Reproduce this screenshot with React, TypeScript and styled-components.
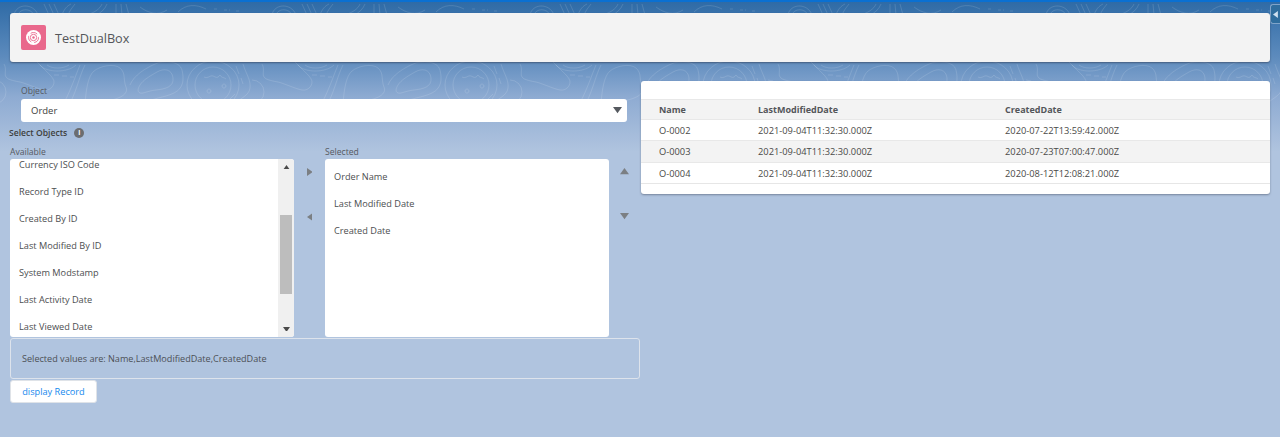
import React from "react";
import styled, { createGlobalStyle } from "styled-components";

const GlobalStyle = createGlobalStyle`
  html, body { margin: 0; padding: 0; }
  body {
    font-family: "Open Sans", "Noto Sans", "Liberation Sans", sans-serif;
    color: #3e3e3c;
    overflow: hidden;
  }
`;

const Page = styled.div`
  position: relative;
  width: 1280px;
  height: 437px;
  box-sizing: border-box;
  padding: 11px 10px 0;
  overflow: hidden;
  background: linear-gradient(180deg, #2f6ba6 0, #5d8bbd 55px, #8eabd2 95px, #b0c4df 150px);
  border-top: 2px solid #0a70d2;
`;

const Contours = styled.svg`
  position: absolute;
  left: 0;
  top: 0;
  width: 1280px;
  height: 104px;
`;

const SideTab = styled.div`
  position: absolute;
  right: 0;
  top: 2px;
  width: 10px;
  height: 20px;
  display: flex;
  align-items: center;
  justify-content: center;
  box-sizing: border-box;
  border: 1px solid #7fa3c9;
  border-right: 0;
  border-radius: 3px 0 0 3px;
  background: #2f6d9e;
`;

const Header = styled.header`
  position: relative;
  height: 49px;
  display: flex;
  align-items: center;
  gap: 9px;
  padding: 0 11px;
  background: #f3f3f3;
  border-radius: 3px;
  box-shadow: 0 1px 2px rgba(40, 50, 70, 0.55);
`;

const HeaderIcon = styled.div`
  width: 25px;
  height: 25px;
  display: flex;
  align-items: center;
  justify-content: center;
  background: #e9688c;
  border-radius: 2px;
`;

const HeaderTitle = styled.h1`
  margin: 0;
  font-size: 12.7px;
  font-weight: 400;
  color: #54565a;
`;

const Columns = styled.div`
  position: relative;
  display: grid;
  grid-template-columns: 630px 630px;
  margin-top: 19px;
`;

const LeftColumn = styled.section`
  display: flex;
  flex-direction: column;
`;

const ObjectField = styled.div`
  padding: 4px 13px 0 11px;
`;

const SmallLabel = styled.div`
  font-size: 8.6px;
  line-height: 12px;
  color: #55595f;
`;

const SelectBox = styled.div`
  height: 23px;
  margin-top: 2px;
  display: flex;
  align-items: center;
  justify-content: space-between;
  padding: 0 5px 0 10px;
  background: #fff;
  border-radius: 3px;
  font-size: 9.5px;
  color: #3e3e3c;
`;

const GroupTitle = styled.div`
  margin: 5px 0 0 -1px;
  height: 12px;
  display: flex;
  align-items: center;
  gap: 7px;
  font-size: 8.6px;
  font-weight: 600;
  color: #3e3e3c;
`;

const InfoDot = styled.span`
  width: 10px;
  height: 10px;
  border-radius: 50%;
  background: #6b6d70;
  color: #fff;
  font-size: 7px;
  line-height: 10px;
  font-weight: 700;
  text-align: center;
`;

const DualBox = styled.div`
  display: grid;
  grid-template-columns: 284px 31px 284px 31px;
  margin-top: 7px;
`;

const BoxColumn = styled.div`
  display: flex;
  flex-direction: column;
`;

const ListPanel = styled.div`
  height: 178px;
  margin-top: 1px;
  display: flex;
  overflow: hidden;
  background: #fff;
  border-radius: 3px;
`;

const ListItems = styled.ul<{ $offset: number }>`
  flex: 1;
  margin: ${(p) => p.$offset}px 0 0;
  padding: 0 0 0 9px;
  list-style: none;
`;

const ListItem = styled.li`
  height: 27px;
  line-height: 27px;
  font-size: 9.2px;
  white-space: nowrap;
  color: #4c4e50;
`;

const Scrollbar = styled.div`
  width: 16px;
  display: flex;
  flex-direction: column;
  align-items: center;
  background: #f0f0f0;
`;

const ScrollButton = styled.div`
  height: 16px;
  display: flex;
  align-items: center;
  justify-content: center;
`;

const ScrollTrack = styled.div`
  flex: 1;
  width: 12px;
  padding-top: 40px;
  box-sizing: border-box;
  align-self: center;
`;

const ScrollThumb = styled.div`
  height: 79px;
  background: #bdbdbd;
`;

const MoveButtons = styled.div`
  display: flex;
  flex-direction: column;
  align-items: center;
  gap: 38px;
  padding-top: 22px;
`;

const ArrowSlot = styled.div`
  height: 7px;
  display: flex;
  align-items: center;
  justify-content: center;
`;

const Triangle = styled.svg<{ $color?: string }>`
  display: block;
  fill: ${(p) => p.$color || "#7b7f83"};
`;

const ValuesBox = styled.div`
  height: 41px;
  margin-top: 1px;
  box-sizing: border-box;
  display: flex;
  align-items: center;
  padding: 0 0 0 11px;
  border: 1px solid #dde3ec;
  border-radius: 3px;
  font-size: 9.1px;
  color: #4c5056;
`;

const ActionButton = styled.button`
  width: 87px;
  height: 23px;
  margin-top: 1px;
  padding: 0;
  border: 1px solid #dfe3e8;
  border-radius: 3px;
  background: #fff;
  color: #1589ee;
  font: inherit;
  font-size: 9.2px;
`;

const TableCard = styled.section`
  align-self: start;
  margin-left: 1px;
  height: 113px;
  box-sizing: border-box;
  padding-top: 18px;
  background: #fff;
  border-radius: 3px;
  box-shadow: 0 1px 2px rgba(60, 70, 90, 0.5);
`;

const Table = styled.div`
  border-top: 1px solid #e8e8e8;
  border-bottom: 1px solid #e6e6e6;
`;

const TableRow = styled.div<{ $height: number; $head?: boolean; $shade?: boolean }>`
  display: grid;
  grid-template-columns: 99px 247px 1fr;
  align-items: center;
  box-sizing: border-box;
  height: ${(p) => p.$height}px;
  padding-left: 18px;
  background: ${(p) => (p.$shade ? "#f3f3f3" : "#fff")};
  border-bottom: 1px solid #e8e8e8;
  font-size: ${(p) => (p.$head ? 9 : 9.3)}px;
  font-weight: ${(p) => (p.$head ? 700 : 400)};
  color: ${(p) => (p.$head ? "#54565a" : "#4a4a48")};
  &:last-child { border-bottom: 0; }
`;

const available = [
  "Currency ISO Code",
  "Record Type ID",
  "Created By ID",
  "Last Modified By ID",
  "System Modstamp",
  "Last Activity Date",
  "Last Viewed Date",
];

const selected = ["Order Name", "Last Modified Date", "Created Date"];

const records = [
  { height: 21, cells: ["O-0002", "2021-09-04T11:32:30.000Z", "2020-07-22T13:59:42.000Z"] },
  { height: 22, cells: ["O-0003", "2021-09-04T11:32:30.000Z", "2020-07-23T07:00:47.000Z"] },
  { height: 20, cells: ["O-0004", "2021-09-04T11:32:30.000Z", "2020-08-12T12:08:21.000Z"] },
];

const arrows: Record<string, string> = {
  up: "0,7 5,0 10,7",
  down: "0,0 10,0 5,7",
  left: "7,0 7,10 0,5",
  right: "0,0 7,5 0,10",
};

const Arrow = ({ dir, size = 9, color }: { dir: string; size?: number; color?: string }) => {
  const flat = dir === "up" || dir === "down";
  return (
    <Triangle
      $color={color}
      width={flat ? size : size * 0.7}
      height={flat ? size * 0.7 : size}
      viewBox={flat ? "0 0 10 7" : "0 0 7 10"}
    >
      <polygon points={arrows[dir]} />
    </Triangle>
  );
};

const TopoPattern = () => (
  <Contours>
    <defs>
      <pattern id="topo" width="258" height="104" patternUnits="userSpaceOnUse">
        <g fill="none" stroke="#fff" strokeOpacity="0.16" strokeWidth="0.8">
          {/* top band */}
          <path d="M14 13c2-12 20-12 24 0" />
          <path d="M18 13c2-7 13-7 16 0" />
          <path d="M44 2l5 11M49 2l5 11M54 2l5 11" />
          <path d="M62 13c2-6 5-9 9-11M68 13c2-5 4-7 7-11" />
          <path d="M86 13c8-2 14-6 16-11M96 13c5-2 9-6 11-11" />
          <path d="M116 2v11M121 2l1 11M126 2l3 11" />
          <path d="M140 5c8 6 18 9 27 3" />
          <path d="M178 10c8-8 18-8 28-3" />
          <path d="M214 7h5M224 8h6M236 9h5" strokeDasharray="3 2" />
          {/* lower band */}
          <path d="M4 62c3 5 0 10 2 13s9 4 14 5 18 7 24 8 10-4 10-8-6-9-9-12-4-4-8-8" />
          <path d="M-6 78a12 12 0 1 1 0 24M252 78a12 12 0 1 1 0 24" />
          <path d="M40 63c6 8 28 8 36 0M47 63c5 4 16 4 22 0" />
          <path d="M54 73h5M62 74h5M70 75h4" />
          <path d="M85 63c-6 12-8 25-15 38M80 63c-5 12-8 22-16 38" />
          <path d="M85 102c1-14 3-28 9-33s20-8 26-3 3 12 6 19-6 12-20 14" />
          <path d="M140 83c3-5 10-9 17-13s15-3 16 6-8 11-17 12-13 4-16 3-2-5 0-8z" />
          <path d="M130 83c4-10 16-17 25-21s25-3 27 6 2 18-8 23-24 5-28 11" />
          <path d="M195 83a18 18 0 1 1 36 0 18 18 0 1 1-36 0z" />
          <path d="M187 83a26 24 0 1 1 52 0 26 24 0 1 1-52 0z" />
          <path d="M204 75c4 2 6-2 9-1s4 3 7-1c1 3 4 2 6 4" />
          <path d="M207 89a2 2 0 1 1 0 .1M222 84a2 2 0 1 1 0 .1" />
          <path d="M243 62c3 10 8 16 7 24s-10 10-15 16" />
          <path d="M236 64l3 8M241 76l2 6M235 92l-6 6" />
        </g>
      </pattern>
    </defs>
    <rect width="1280" height="104" fill="url(#topo)" />
  </Contours>
);

const App = () => (
  <Page>
    <GlobalStyle />
    <TopoPattern />
    <SideTab>
      <Arrow dir="left" size={7} color="#cfe0ef" />
    </SideTab>
    <Header>
      <HeaderIcon>
        <svg width="17" height="17" viewBox="0 0 17 17" fill="none">
          <circle cx="8.5" cy="8.5" r="7.5" fill="#fff" />
          <circle cx="8.5" cy="8.5" r="5" stroke="#e9688c" strokeWidth="0.9" strokeDasharray="7 3" />
          <circle cx="8.5" cy="8.5" r="3.2" stroke="#e9688c" strokeWidth="0.9" />
          <circle cx="8.5" cy="8.5" r="1.2" fill="#e9688c" />
        </svg>
      </HeaderIcon>
      <HeaderTitle>TestDualBox</HeaderTitle>
    </Header>
    <Columns>
      <LeftColumn>
        <ObjectField>
          <SmallLabel>Object</SmallLabel>
          <SelectBox>
            Order
            <Arrow dir="down" size={9} color="#55595f" />
          </SelectBox>
        </ObjectField>
        <GroupTitle>
          Select Objects <InfoDot>i</InfoDot>
        </GroupTitle>
        <DualBox>
          <BoxColumn>
            <SmallLabel>Available</SmallLabel>
            <ListPanel>
              <ListItems $offset={-8}>
                {available.map((item) => (
                  <ListItem key={item}>{item}</ListItem>
                ))}
              </ListItems>
              <Scrollbar>
                <ScrollButton>
                  <Arrow dir="up" size={7} color="#4a4a4a" />
                </ScrollButton>
                <ScrollTrack>
                  <ScrollThumb />
                </ScrollTrack>
                <ScrollButton>
                  <Arrow dir="down" size={7} color="#4a4a4a" />
                </ScrollButton>
              </Scrollbar>
            </ListPanel>
          </BoxColumn>
          <MoveButtons>
            <ArrowSlot>
              <Arrow dir="right" size={8} />
            </ArrowSlot>
            <ArrowSlot>
              <Arrow dir="left" size={8} />
            </ArrowSlot>
          </MoveButtons>
          <BoxColumn>
            <SmallLabel>Selected</SmallLabel>
            <ListPanel>
              <ListItems $offset={4}>
                {selected.map((item) => (
                  <ListItem key={item}>{item}</ListItem>
                ))}
              </ListItems>
            </ListPanel>
          </BoxColumn>
          <MoveButtons>
            <ArrowSlot>
              <Arrow dir="up" size={9} />
            </ArrowSlot>
            <ArrowSlot>
              <Arrow dir="down" size={9} />
            </ArrowSlot>
          </MoveButtons>
        </DualBox>
        <ValuesBox>Selected values are: Name,LastModifiedDate,CreatedDate</ValuesBox>
        <ActionButton>display Record</ActionButton>
      </LeftColumn>
      <TableCard>
        <Table>
          <TableRow $height={20} $head $shade>
            <span>Name</span>
            <span>LastModifiedDate</span>
            <span>CreatedDate</span>
          </TableRow>
          {records.map((row, i) => (
            <TableRow key={row.cells[0]} $height={row.height} $shade={i === 1}>
              {row.cells.map((cell) => (
                <span key={cell}>{cell}</span>
              ))}
            </TableRow>
          ))}
        </Table>
      </TableCard>
    </Columns>
  </Page>
);

export default App;
